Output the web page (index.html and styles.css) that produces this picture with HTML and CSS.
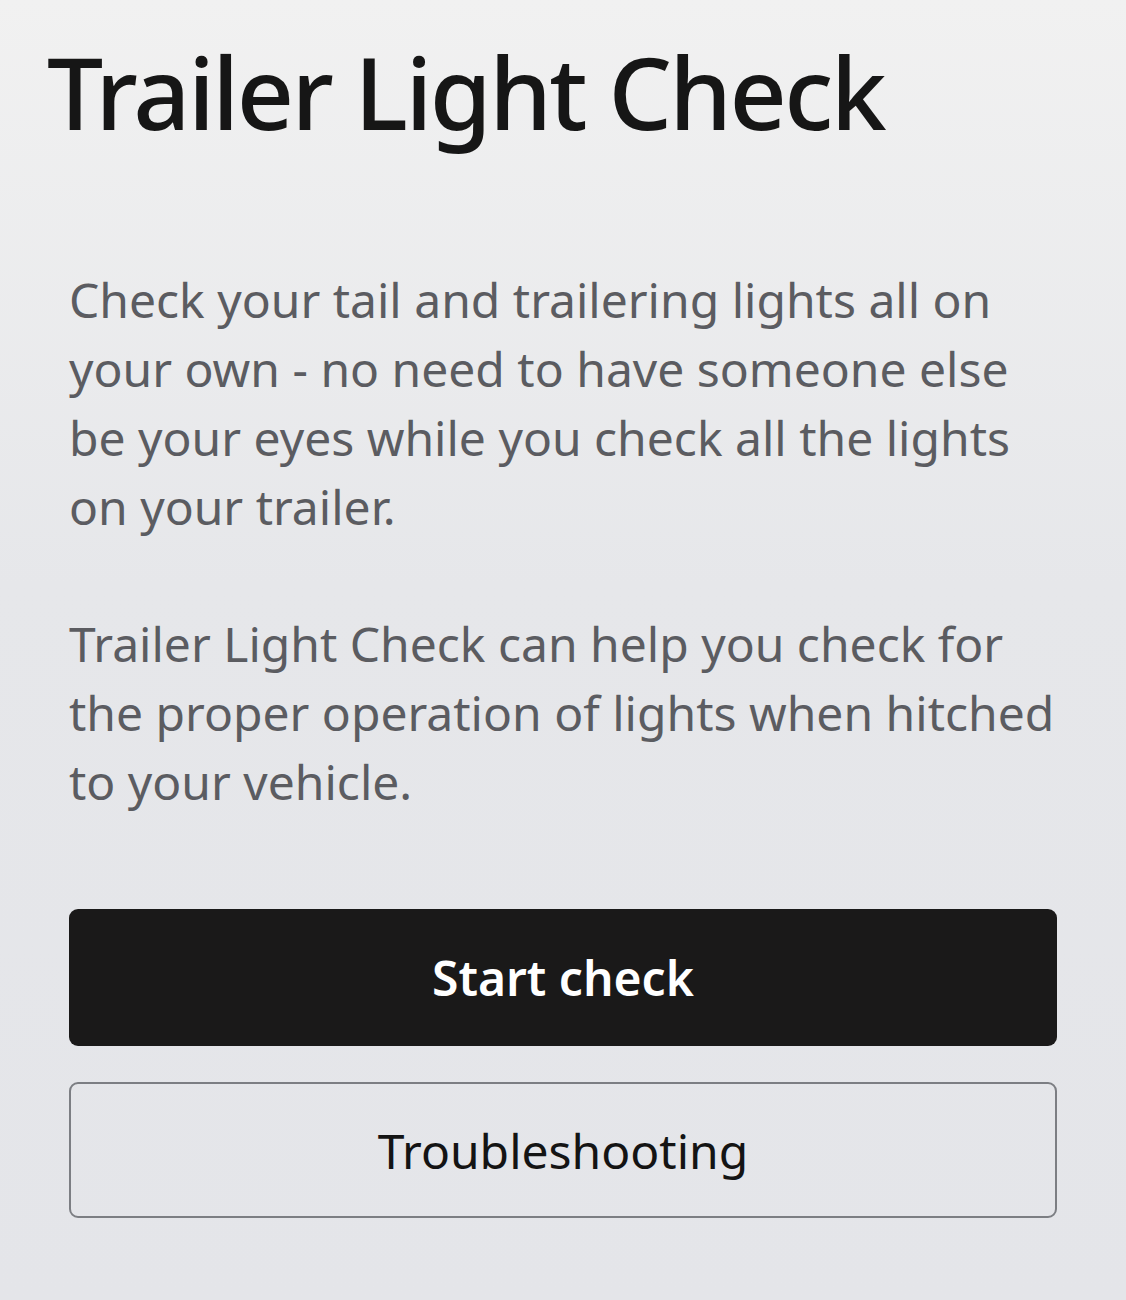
FILE: index.html
```html
<!DOCTYPE html>
<html lang="en">
  <head>
    <meta charset="UTF-8" />
    <meta name="viewport" content="width=device-width, initial-scale=1.0" />
    <title>Trailer Light Check</title>
    <link rel="stylesheet" href="styles.css">
  </head>
  <body>
    <div class="screen">
      <h1 class="title">Trailer Light Check</h1>

      <div class="intro">
        <p>Check your tail and trailering lights all on your own - no need to have someone else be your eyes while you check all the lights on your trailer.</p>
        <p>Trailer Light Check can help you check for the proper operation of lights when hitched to your vehicle.</p>
      </div>

      <div class="actions">
        <button class="btn btn_primary">Start check</button>
        <button class="btn btn_outline">Troubleshooting</button>
      </div>
    </div>
  </body>
</html>
```

FILE: styles.css
```css
* {
  padding: 0;
  margin: 0;
  box-sizing: border-box;
}
body {
  width: 100%;
  min-height: 1300px;
  background: linear-gradient(180deg, #f1f1f1 0%, #e6e7ea 45%, #e4e5e9 100%);
  font-family: "Noto Sans", "Open Sans", sans-serif;
  color: #1a1a1a;
}
.screen {
  padding: 31px 69px 60px 69px;
}
.title {
  margin-left: -22px;
  font-size: 100px;
  line-height: 120px;
  font-weight: 500;
  letter-spacing: -2.6px;
  color: #161616;
}
.intro {
  margin-top: 114px;
}
.intro p {
  font-size: 48px;
  line-height: 69px;
  color: #5b5c61;
}
.intro p + p {
  margin-top: 68px;
}
.actions {
  margin-top: 93px;
  display: flex;
  flex-direction: column;
  gap: 36px;
}
.btn {
  width: 100%;
  height: 137px;
  border-radius: 9px;
  font-family: inherit;
  font-size: 48px;
  cursor: pointer;
}
.btn_primary {
  background: #1a1919;
  color: #fff;
  border: none;
  font-weight: 600;
}
.btn_outline {
  height: 136px;
  background: transparent;
  border: 2px solid #7c7e83;
  color: #141414;
  font-weight: 400;
}
```
